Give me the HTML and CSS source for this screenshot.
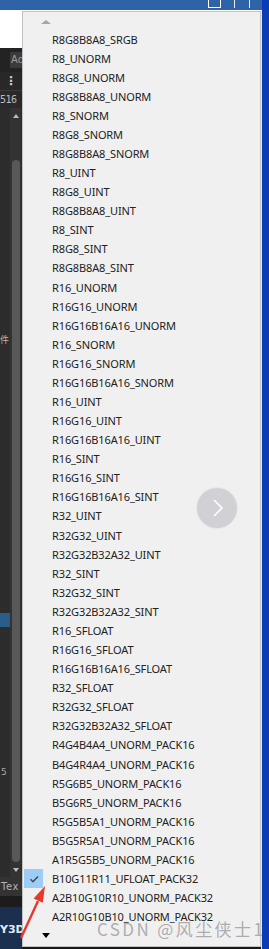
FILE: index.html
```html
<!DOCTYPE html>
<html>
<head>
<meta charset="utf-8">
<link rel="stylesheet" href="styles.css">
</head>
<body>
<div class="screen">
  <div class="main">
    <div class="titlebar">
      <span class="tb-box"></span>
      <span class="tb-line"></span>
      <span class="tb-line"></span>
    </div>
    <div class="content">
      <div class="side">
        <div class="side-white"></div>
        <div class="side-toolbar"><span class="side-btn">Ad</span></div>
        <div class="side-menu">⋮</div>
        <div class="side-num">516</div>
        <div class="side-body">
          <div class="side-left">
            <span class="side-char">件</span>
            <span class="side-sel"></span>
            <span class="side-five">5</span>
          </div>
          <div class="side-scroll">
            <span class="sc-up"></span>
            <span class="sc-thumb"></span>
            <span class="sc-down"></span>
          </div>
        </div>
        <div class="side-tab">Tex</div>
        <div class="side-dark"></div>
        <div class="side-navy">Y3D</div>
      </div>
      <div class="popcol">
        <div class="popup">
          <div class="pop-up"><span class="tri-up"></span></div>
          <div class="items">
            <div class="item"><span class="chk"></span><span class="lbl">R8G8B8A8_SRGB</span></div>
            <div class="item"><span class="chk"></span><span class="lbl">R8_UNORM</span></div>
            <div class="item"><span class="chk"></span><span class="lbl">R8G8_UNORM</span></div>
            <div class="item"><span class="chk"></span><span class="lbl">R8G8B8A8_UNORM</span></div>
            <div class="item"><span class="chk"></span><span class="lbl">R8_SNORM</span></div>
            <div class="item"><span class="chk"></span><span class="lbl">R8G8_SNORM</span></div>
            <div class="item"><span class="chk"></span><span class="lbl">R8G8B8A8_SNORM</span></div>
            <div class="item"><span class="chk"></span><span class="lbl">R8_UINT</span></div>
            <div class="item"><span class="chk"></span><span class="lbl">R8G8_UINT</span></div>
            <div class="item"><span class="chk"></span><span class="lbl">R8G8B8A8_UINT</span></div>
            <div class="item"><span class="chk"></span><span class="lbl">R8_SINT</span></div>
            <div class="item"><span class="chk"></span><span class="lbl">R8G8_SINT</span></div>
            <div class="item"><span class="chk"></span><span class="lbl">R8G8B8A8_SINT</span></div>
            <div class="item"><span class="chk"></span><span class="lbl">R16_UNORM</span></div>
            <div class="item"><span class="chk"></span><span class="lbl">R16G16_UNORM</span></div>
            <div class="item"><span class="chk"></span><span class="lbl">R16G16B16A16_UNORM</span></div>
            <div class="item"><span class="chk"></span><span class="lbl">R16_SNORM</span></div>
            <div class="item"><span class="chk"></span><span class="lbl">R16G16_SNORM</span></div>
            <div class="item"><span class="chk"></span><span class="lbl">R16G16B16A16_SNORM</span></div>
            <div class="item"><span class="chk"></span><span class="lbl">R16_UINT</span></div>
            <div class="item"><span class="chk"></span><span class="lbl">R16G16_UINT</span></div>
            <div class="item"><span class="chk"></span><span class="lbl">R16G16B16A16_UINT</span></div>
            <div class="item"><span class="chk"></span><span class="lbl">R16_SINT</span></div>
            <div class="item"><span class="chk"></span><span class="lbl">R16G16_SINT</span></div>
            <div class="item"><span class="chk"></span><span class="lbl">R16G16B16A16_SINT</span></div>
            <div class="item"><span class="chk"></span><span class="lbl">R32_UINT</span></div>
            <div class="item"><span class="chk"></span><span class="lbl">R32G32_UINT</span></div>
            <div class="item"><span class="chk"></span><span class="lbl">R32G32B32A32_UINT</span></div>
            <div class="item"><span class="chk"></span><span class="lbl">R32_SINT</span></div>
            <div class="item"><span class="chk"></span><span class="lbl">R32G32_SINT</span></div>
            <div class="item"><span class="chk"></span><span class="lbl">R32G32B32A32_SINT</span></div>
            <div class="item"><span class="chk"></span><span class="lbl">R16_SFLOAT</span></div>
            <div class="item"><span class="chk"></span><span class="lbl">R16G16_SFLOAT</span></div>
            <div class="item"><span class="chk"></span><span class="lbl">R16G16B16A16_SFLOAT</span></div>
            <div class="item"><span class="chk"></span><span class="lbl">R32_SFLOAT</span></div>
            <div class="item"><span class="chk"></span><span class="lbl">R32G32_SFLOAT</span></div>
            <div class="item"><span class="chk"></span><span class="lbl">R32G32B32A32_SFLOAT</span></div>
            <div class="item"><span class="chk"></span><span class="lbl">R4G4B4A4_UNORM_PACK16</span></div>
            <div class="item"><span class="chk"></span><span class="lbl">B4G4R4A4_UNORM_PACK16</span></div>
            <div class="item"><span class="chk"></span><span class="lbl">R5G6B5_UNORM_PACK16</span></div>
            <div class="item"><span class="chk"></span><span class="lbl">B5G6R5_UNORM_PACK16</span></div>
            <div class="item"><span class="chk"></span><span class="lbl">R5G5B5A1_UNORM_PACK16</span></div>
            <div class="item"><span class="chk"></span><span class="lbl">B5G5R5A1_UNORM_PACK16</span></div>
            <div class="item"><span class="chk"></span><span class="lbl">A1R5G5B5_UNORM_PACK16</span></div>
            <div class="item"><span class="chk checked"><svg width="19" height="19" viewBox="0 0 19 19"><path d="M6.5 10.3 L9 12.8 L14 7.6" fill="none" stroke="#3a4756" stroke-width="1.4"/></svg></span><span class="lbl">B10G11R11_UFLOAT_PACK32</span></div>
            <div class="item"><span class="chk"></span><span class="lbl">A2B10G10R10_UNORM_PACK32</span></div>
            <div class="item"><span class="chk"></span><span class="lbl">A2R10G10B10_UNORM_PACK32</span></div>
          </div>
          <div class="pop-down"><span class="tri-down"></span></div>
          <div class="pager">
            <svg width="40" height="40" viewBox="0 0 40 40"><path d="M17 12 L25 20 L17 28" fill="none" stroke="#ffffff" stroke-width="1.6"/></svg>
          </div>
        </div>
      </div>
    </div>
  </div>
  <div class="edge"></div>
  <div class="watermark">CSDN @风尘侠士1</div>
  <svg class="redarrow" width="60" height="80" viewBox="0 0 60 80">
    <path d="M21 68 L38 31" stroke="#e8382b" stroke-width="2.4" fill="none"/>
    <path d="M45 16 L42.8 32.8 L33.6 28.4 Z" fill="#e8382b"/>
  </svg>
</div>
</body>
</html>
```

FILE: styles.css
```css
html, body {
  margin: 0;
  padding: 0;
}
body {
  width: 269px;
  height: 949px;
  overflow: hidden;
  background: #1a1a1a;
  font-family: "Noto Sans", "DejaVu Sans", sans-serif;
}
.screen {
  position: relative;
  display: flex;
  width: 269px;
  height: 949px;
}
.main {
  width: 262px;
  display: flex;
  flex-direction: column;
}
.edge {
  width: 7px;
  background: #0b3bb5;
}
.titlebar {
  height: 10px;
  background: #2e64a7;
  display: flex;
  align-items: flex-start;
}
.tb-box {
  margin-left: 208px;
  width: 11px;
  height: 7px;
  border: 1px solid #ffffff;
  border-top: none;
}
.tb-line {
  margin-left: 13px;
  width: 1px;
  height: 8px;
  background: #e8eef7;
}
.tb-line + .tb-line {
  margin-left: 14px;
}
.content {
  flex: 1;
  display: flex;
}
.side {
  width: 22px;
  display: flex;
  flex-direction: column;
  font-family: "DejaVu Sans", sans-serif;
}
.side-white {
  height: 38px;
  background: #ffffff;
}
.side-toolbar {
  height: 24px;
  background: #232323;
  display: flex;
  align-items: center;
}
.side-btn {
  margin-left: 10px;
  width: 12px;
  height: 16px;
  background: #3b3b3b;
  color: #9c9c9c;
  font-size: 10px;
  line-height: 16px;
  padding-left: 1px;
  overflow: hidden;
  white-space: nowrap;
}
.side-menu {
  height: 18px;
  background: #282828;
  color: #c8c8c8;
  font-size: 12px;
  line-height: 18px;
  padding-left: 5px;
  font-weight: bold;
}
.side-num {
  height: 17px;
  border-top: 1px solid #3a3a3a;
  background: #2a2a2a;
  color: #bcbcbc;
  font-family: "DejaVu Sans Mono", monospace;
  font-size: 10px;
  line-height: 17px;
  letter-spacing: -0.5px;
  overflow: hidden;
  white-space: nowrap;
}
.side-body {
  height: 769px;
  display: flex;
  background: #2c2c2c;
}
.side-left {
  width: 10px;
  display: flex;
  flex-direction: column;
  color: #b8b8b8;
  font-size: 9px;
  line-height: 12px;
  overflow: hidden;
}
.side-char {
  margin-top: 226px;
  height: 12px;
  font-family: "Noto Sans CJK SC", sans-serif;
}
.side-sel {
  margin-top: 267px;
  height: 14px;
  background: #2b5d8c;
}
.side-five {
  margin-top: 139px;
  height: 12px;
  padding-left: 1px;
  color: #a8a8a8;
}
.side-scroll {
  width: 11px;
  margin-right: 1px;
  background: #333333;
  display: flex;
  flex-direction: column;
  align-items: center;
}
.sc-up {
  margin-top: 6px;
  width: 0;
  height: 0;
  border-left: 3px solid transparent;
  border-right: 3px solid transparent;
  border-bottom: 4px solid #bdbdbd;
}
.sc-thumb {
  margin-top: 42px;
  width: 8px;
  height: 702px;
  border-radius: 4px;
  background: #585858;
}
.sc-down {
  margin-top: 6px;
  width: 0;
  height: 0;
  border-left: 3px solid transparent;
  border-right: 3px solid transparent;
  border-top: 4px solid #bdbdbd;
}
.side-tab {
  height: 19px;
  background: #333333;
  color: #b4b4b4;
  font-size: 10px;
  line-height: 19px;
  padding-left: 1px;
  letter-spacing: 0.5px;
  overflow: hidden;
  white-space: nowrap;
}
.side-dark {
  height: 11px;
  background: #1c1c1c;
}
.side-navy {
  flex: 1;
  background: #1b304e;
  color: #e4eaf2;
  font-size: 11px;
  line-height: 12px;
  padding-top: 17px;
  font-weight: bold;
  overflow: hidden;
  white-space: nowrap;
}
.popcol {
  width: 239px;
  border-right: 1px solid #e6e6e6;
  padding-top: 1px;
  background: linear-gradient(#ffffff 1px, #181818 1px);
}
.popup {
  position: relative;
  height: 934px;
  border: 1px solid #c2c2c2;
  background: #f0f0f0;
  display: flex;
  flex-direction: column;
}
.pop-up {
  height: 17.5px;
  padding-left: 18px;
  display: flex;
  align-items: flex-start;
}
.tri-up {
  margin-top: 8px;
  width: 0;
  height: 0;
  border-left: 5px solid transparent;
  border-right: 5px solid transparent;
  border-bottom: 4px solid #a6a6a6;
}
.items {
  display: flex;
  flex-direction: column;
}
.item {
  height: 19.087px;
  display: flex;
  align-items: center;
}
.chk {
  margin-left: 1px;
  width: 19px;
  height: 100%;
  flex: none;
}
.chk.checked {
  background: #9dcdf6;
  display: flex;
  align-items: center;
}
.lbl {
  margin-left: 9px;
  font-family: "Noto Sans", sans-serif;
  font-size: 11px;
  color: #222222;
  letter-spacing: -0.12px;
  white-space: nowrap;
  line-height: 19px;
}
.pop-down {
  flex: 1;
  padding-left: 19px;
  display: flex;
  align-items: flex-start;
}
.tri-down {
  margin-top: 7px;
  width: 0;
  height: 0;
  border-left: 4.5px solid transparent;
  border-right: 4.5px solid transparent;
  border-top: 5px solid #000000;
}
.pager {
  position: absolute;
  left: 174px;
  top: 476px;
  width: 40px;
  height: 40px;
  border-radius: 50%;
  background: #d1d1d5;
  box-shadow: 0 0 0 1px #e7e7e9;
}
.pager svg {
  display: block;
}
.watermark {
  position: absolute;
  left: 97px;
  top: 920px;
  font-family: "Noto Sans CJK SC", "Noto Sans", sans-serif;
  font-size: 17px;
  line-height: 17px;
  letter-spacing: 2.4px;
  color: rgba(150, 150, 150, 0.75);
  white-space: nowrap;
}
.redarrow {
  position: absolute;
  left: 0;
  top: 870px;
}
```
